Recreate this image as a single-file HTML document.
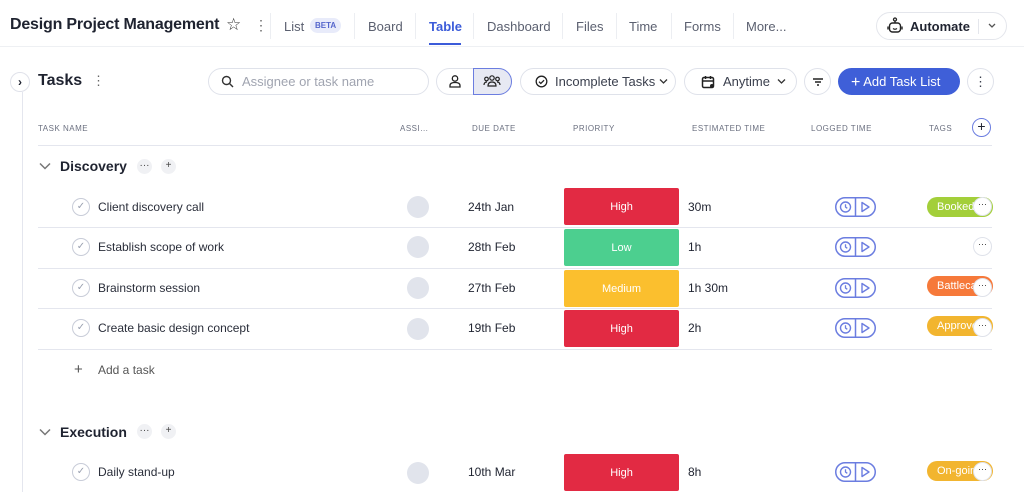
<!DOCTYPE html>
<html><head><style>
*{box-sizing:border-box;margin:0;padding:0}
body{width:1024px;height:490px;overflow:hidden;background:#fff;font-family:"Liberation Sans",sans-serif;color:#1f2330;position:relative}
.a{position:absolute}
.nav{font-size:13px;color:#5b6070;top:19px}
.sep{width:1px;height:26px;background:#eceef2;top:13px}
.btn{border:1px solid #dfe2ea;border-radius:16px;height:27px;top:68px;display:flex;align-items:center;font-size:13px;color:#3a3f4d}
.th{font-size:8px;letter-spacing:.5px;color:#6b7080;top:124px}
.line{height:1px;background:#e4e6ee;left:38px;width:954px}
.chk{width:18px;height:18px;border:1px solid #c8ccd8;border-radius:50%;left:72px;font-size:10px;color:#9aa0b0;text-align:center;line-height:16px}
.tn{left:98px;font-size:12px;color:#2a2e3a}
.av{width:22px;height:22px;border-radius:50%;background:#e1e4ec;left:407px}
.dd{left:468px;font-size:12px}
.pr{left:564px;width:115px;height:37px;color:#fff;font-size:11px;display:flex;align-items:center;justify-content:center;border-radius:2px}
.et{left:688px;font-size:12px}
.tm{left:835px;width:41px;height:20px}
.tag{height:20px;border-radius:10px;color:#fff;font-size:11px;line-height:20px;padding-left:10px;left:927px;width:66px;overflow:hidden;white-space:nowrap}
.dots{width:19px;height:19px;border-radius:50%;background:#fff;border:1px solid #dfe2ea;left:973px;font-size:9px;text-align:center;line-height:13px;color:#333}
.gh{font-size:14px;font-weight:bold;left:60px}
.sm{width:15px;height:15px;border-radius:50%;background:#f0f1f4;font-size:10px;text-align:center;line-height:14px;color:#444}
</style></head><body>
<svg width="0" height="0" style="position:absolute"><defs><symbol id="tm" viewBox="0 0 41 20"><rect x="0.75" y="0.75" width="39.5" height="18.5" rx="9.25" fill="none" stroke="#6b7de0" stroke-width="1.5"/><line x1="20.5" y1="1" x2="20.5" y2="19" stroke="#6b7de0" stroke-width="1.5"/><circle cx="10.5" cy="10" r="5" fill="none" stroke="#6b7de0" stroke-width="1.4"/><path d="M10.5 7.3V10l1.8 1.3" fill="none" stroke="#6b7de0" stroke-width="1.3"/><path d="M27 5.5v9l7-4.5z" fill="none" stroke="#6b7de0" stroke-width="1.4" stroke-linejoin="round"/></symbol></defs></svg>
<div class="a" style="left:0;top:46px;width:1024px;height:1px;background:#eef0f3"></div>
<div class="a" style="left:10px;top:16px;font-size:16px;letter-spacing:-0.2px;font-weight:bold">Design Project Management</div>
<div class="a" style="left:226px;top:15px;font-size:17px;color:#333">☆</div>
<div class="a" style="left:254px;top:17px;font-size:14px;color:#666">⋮</div>
<div class="a sep" style="left:270px"></div>
<div class="a nav" style="left:284px">List</div>
<div class="a" style="left:310px;top:18px;background:#e8ebfa;color:#5566cc;font-size:8px;font-weight:bold;padding:3px 5px;border-radius:8px">BETA</div>
<div class="a sep" style="left:354px"></div>
<div class="a nav" style="left:368px">Board</div>
<div class="a sep" style="left:415px"></div>
<div class="a nav" style="left:429px;color:#3b5bd9;font-weight:bold">Table</div>
<div class="a" style="left:429px;top:43px;width:32px;height:2px;background:#3b5bd9"></div>
<div class="a sep" style="left:473px"></div>
<div class="a nav" style="left:487px">Dashboard</div>
<div class="a sep" style="left:562px"></div>
<div class="a nav" style="left:576px">Files</div>
<div class="a sep" style="left:616px"></div>
<div class="a nav" style="left:629px">Time</div>
<div class="a sep" style="left:671px"></div>
<div class="a nav" style="left:684px">Forms</div>
<div class="a sep" style="left:733px"></div>
<div class="a nav" style="left:746px">More...</div>
<div class="a" style="left:876px;top:12px;width:131px;height:28px;border:1px solid #e4e6ec;border-radius:14px"></div>
<svg class="a" style="left:887px;top:17px" width="16" height="18" viewBox="0 0 16 18"><circle cx="8" cy="2.5" r="1.5" fill="none" stroke="#222" stroke-width="1.3"/><line x1="8" y1="4" x2="8" y2="6" stroke="#222" stroke-width="1.3"/><rect x="2.5" y="6" width="11" height="9" rx="3" fill="none" stroke="#222" stroke-width="1.4"/><path d="M1 9.5v3M15 9.5v3" stroke="#222" stroke-width="1.4"/><path d="M6 11.5q2 1.5 4 0" fill="none" stroke="#222" stroke-width="1.2"/></svg>
<div class="a" style="left:910px;top:19px;font-size:13px;font-weight:bold">Automate</div>
<div class="a" style="left:978px;top:19px;width:1px;height:15px;background:#e4e6ec"></div>
<svg class="a" style="left:987px;top:22px" width="10" height="8"><path d="M2 2l3 3 3-3" fill="none" stroke="#555" stroke-width="1.3"/></svg>

<div class="a" style="left:22px;top:92px;width:1px;height:400px;background:#e4e6ee"></div>
<div class="a" style="left:10px;top:72px;width:20px;height:20px;border:1px solid #e0e2ea;border-radius:50%;background:#fff;font-size:12px;font-weight:bold;text-align:center;line-height:18px">›</div>
<div class="a" style="left:38px;top:72px;font-size:16px;font-weight:bold">Tasks</div>
<div class="a" style="left:92px;top:73px;font-size:13px;color:#666">⋮</div>
<div class="a btn" style="left:208px;width:221px;padding-left:12px;color:#a0a4b0"><svg width="13" height="13" style="margin-right:8px"><circle cx="5.5" cy="5.5" r="4" fill="none" stroke="#333" stroke-width="1.4"/><path d="M8.5 8.5l3.5 3.5" stroke="#333" stroke-width="1.4"/></svg>Assignee or task name</div>
<div class="a btn" style="left:436px;width:76px;"></div>
<div class="a" style="left:473px;top:68px;width:39px;height:27px;background:#e7e9f3;border:1px solid #6b7de0;border-radius:0 14px 14px 0"></div>
<svg class="a" style="left:448px;top:74px" width="14" height="14"><circle cx="7" cy="4.5" r="2.7" fill="none" stroke="#222" stroke-width="1.3"/><path d="M2 13v-1.5q0-3 5-3t5 3V13z" fill="none" stroke="#222" stroke-width="1.3"/></svg>
<svg class="a" style="left:483px;top:74px" width="18" height="14"><circle cx="9" cy="4" r="2.2" fill="none" stroke="#222" stroke-width="1.2"/><circle cx="3.5" cy="5" r="1.8" fill="none" stroke="#222" stroke-width="1.2"/><circle cx="14.5" cy="5" r="1.8" fill="none" stroke="#222" stroke-width="1.2"/><path d="M5 12q0-4 4-4t4 4zM1 11q0-3 3-3M17 11q0-3-3-3" fill="none" stroke="#222" stroke-width="1.2"/></svg>
<div class="a btn" style="left:520px;width:156px;padding-left:14px"><svg width="13" height="13" style="margin-right:7px"><circle cx="6.5" cy="6.5" r="5.3" fill="none" stroke="#222" stroke-width="1.3"/><path d="M4 6.7l1.8 1.8 3.3-3.3" fill="none" stroke="#222" stroke-width="1.3"/></svg>Incomplete Tasks&nbsp;<svg width="9" height="7"><path d="M1 1.5l3.5 3.5 3.5-3.5" fill="none" stroke="#333" stroke-width="1.3"/></svg></div>
<div class="a btn" style="left:684px;width:113px;padding-left:16px"><svg width="14" height="14" style="margin-right:8px"><rect x="1.5" y="2.5" width="11" height="10" rx="1.5" fill="none" stroke="#222" stroke-width="1.5"/><path d="M4.5 1v3M9.5 1v3M1.5 6h11" stroke="#222" stroke-width="1.5"/><circle cx="11" cy="11" r="2" fill="#222"/></svg>Anytime&nbsp;&nbsp;<svg width="9" height="7"><path d="M1 1.5l3.5 3.5 3.5-3.5" fill="none" stroke="#333" stroke-width="1.3"/></svg></div>
<div class="a btn" style="left:804px;width:27px;justify-content:center"><svg width="12" height="10"><path d="M1 2h10M3 5h6M5 8h2" stroke="#222" stroke-width="1.5"/></svg></div>
<div class="a" style="left:838px;top:68px;width:122px;height:27px;background:#3f5fd8;border-radius:14px;color:#fff;font-size:13px;line-height:27px;padding-left:13px"><span style="font-size:16px;vertical-align:-1px">+</span> Add Task List</div>
<div class="a btn" style="left:967px;width:27px;justify-content:center;font-size:13px">⋮</div>

<div class="a th" style="left:38px">TASK NAME</div>
<div class="a th" style="left:400px">ASSI...</div>
<div class="a th" style="left:472px">DUE DATE</div>
<div class="a th" style="left:573px">PRIORITY</div>
<div class="a th" style="left:692px">ESTIMATED TIME</div>
<div class="a th" style="left:811px">LOGGED TIME</div>
<div class="a th" style="left:929px">TAGS</div>
<div class="a" style="left:972px;top:118px;width:19px;height:19px;border:1.5px solid #6b7de0;border-radius:50%;text-align:center;line-height:15px;font-size:14px">+</div>
<div class="a line" style="top:145px"></div>

<svg class="a" style="left:39px;top:162px" width="12" height="8"><path d="M1 1.5l5 5 5-5" fill="none" stroke="#777" stroke-width="1.5"/></svg>
<div class="a gh" style="top:158px">Discovery</div>
<div class="a sm" style="left:137px;top:159px">···</div>
<div class="a sm" style="left:161px;top:159px">+</div>

<div class="a chk" style="top:198px">✓</div><div class="a tn" style="top:200px">Client discovery call</div><div class="a av" style="top:196px"></div><div class="a dd" style="top:200px">24th Jan</div><div class="a pr" style="top:188px;background:#e22a43">High</div><div class="a et" style="top:200px">30m</div><svg class="a tm" style="top:197px"><use href="#tm"/></svg><div class="a tag" style="top:197px;background:#a3cf3a">Booked</div><div class="a dots" style="top:197px">···</div>
<div class="a line" style="top:227px"></div>
<div class="a chk" style="top:238px">✓</div><div class="a tn" style="top:240px">Establish scope of work</div><div class="a av" style="top:236px"></div><div class="a dd" style="top:240px">28th Feb</div><div class="a pr" style="top:229px;background:#4ccf8f">Low</div><div class="a et" style="top:240px">1h</div><svg class="a tm" style="top:237px"><use href="#tm"/></svg><div class="a dots" style="top:237px">···</div>
<div class="a line" style="top:268px"></div>
<div class="a chk" style="top:279px">✓</div><div class="a tn" style="top:281px">Brainstorm session</div><div class="a av" style="top:277px"></div><div class="a dd" style="top:281px">27th Feb</div><div class="a pr" style="top:270px;background:#fbbf2e">Medium</div><div class="a et" style="top:281px">1h 30m</div><svg class="a tm" style="top:278px"><use href="#tm"/></svg><div class="a tag" style="top:276px;background:#f6793a">Battlecard</div><div class="a dots" style="top:278px">···</div>
<div class="a line" style="top:308px"></div>
<div class="a chk" style="top:319px">✓</div><div class="a tn" style="top:321px">Create basic design concept</div><div class="a av" style="top:318px"></div><div class="a dd" style="top:321px">19th Feb</div><div class="a pr" style="top:310px;background:#e22a43">High</div><div class="a et" style="top:321px">2h</div><svg class="a tm" style="top:318px"><use href="#tm"/></svg><div class="a tag" style="top:316px;background:#f2b52f">Approved</div><div class="a dots" style="top:318px">···</div>
<div class="a line" style="top:349px"></div>
<div class="a" style="left:74px;top:361px;font-size:15px;color:#555">+</div>
<div class="a" style="left:98px;top:363px;font-size:12px;color:#555">Add a task</div>

<svg class="a" style="left:39px;top:428px" width="12" height="8"><path d="M1 1.5l5 5 5-5" fill="none" stroke="#777" stroke-width="1.5"/></svg>
<div class="a gh" style="top:424px">Execution</div>
<div class="a sm" style="left:137px;top:424px">···</div>
<div class="a sm" style="left:161px;top:424px">+</div>
<div class="a chk" style="top:463px">✓</div><div class="a tn" style="top:465px">Daily stand-up</div><div class="a av" style="top:462px"></div><div class="a dd" style="top:465px">10th Mar</div><div class="a pr" style="top:454px;background:#e22a43">High</div><div class="a et" style="top:465px">8h</div><svg class="a tm" style="top:462px"><use href="#tm"/></svg><div class="a tag" style="top:461px;background:#f2b52f">On-going</div><div class="a dots" style="top:462px">···</div>
</body></html>
